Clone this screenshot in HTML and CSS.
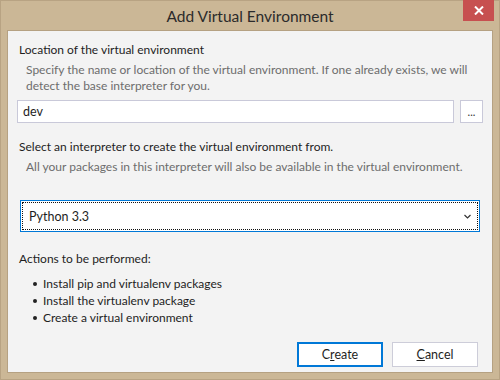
FILE: index.html
```html
<!DOCTYPE html>
<html lang="en">
<head>
    <meta charset="UTF-8">
    <title>Add Virtual Environment</title>
    <link rel="stylesheet" href="styles.css">
</head>
<body>
    <div class="window">
        <!-- Title bar -->
        <div class="title-bar">
            <span class="title">Add Virtual Environment</span>
            <button class="close-btn" type="button" aria-label="Close">
                <svg width="10" height="9" viewBox="0 0 10 9">
                    <path d="M1 0.5 L9 8.5 M9 0.5 L1 8.5" stroke="#fff" stroke-width="2"/>
                </svg>
            </button>
        </div>

        <div class="dialog">
            <div class="label">Location of the virtual environment</div>
            <div class="hint">Specify the name or location of the virtual environment. If one already exists, we will detect the base interpreter for you.</div>

            <div class="path-row">
                <div class="text-input">dev</div>
                <button class="browse-btn" type="button">...</button>
            </div>

            <div class="label label-gap">Select an interpreter to create the virtual environment from.</div>
            <div class="hint">All your packages in this interpreter will also be available in the virtual environment.</div>

            <div class="combo-row">
                <div class="combo">
                    <div class="combo-focus">
                        <span>Python 3.3</span>
                        <svg width="7" height="5" viewBox="0 0 7 5">
                            <path d="M0.5 1 L3.5 4 L6.5 1" fill="none" stroke="#333" stroke-width="1.2"/>
                        </svg>
                    </div>
                </div>
            </div>

            <div class="label actions-title">Actions to be performed:</div>
            <ul class="actions">
                <li>Install pip and virtualenv packages</li>
                <li>Install the virtualenv package</li>
                <li>Create a virtual environment</li>
            </ul>

            <div class="buttons">
                <button class="btn btn-default" type="button">C<u>r</u>eate</button>
                <button class="btn" type="button"><u>C</u>ancel</button>
            </div>
        </div>
    </div>
</body>
</html>
```

FILE: styles.css
```css
* {
    margin: 0;
    padding: 0;
    box-sizing: border-box;
}

body {
    width: 500px;
    height: 380px;
    font-family: Lato, 'Liberation Sans', sans-serif;
    font-size: 12px;
    color: #1e1e1e;
    background: #cbb796;
}

.window {
    width: 500px;
    height: 380px;
    display: flex;
    flex-direction: column;
    background: #cbb796;
    border: 1px solid #b8a383;
}

.title-bar {
    position: relative;
    height: 29px;
    display: flex;
    align-items: center;
    justify-content: center;
}

.title {
    font-size: 15.5px;
    color: #2b2b2b;
    margin-top: 1px;
}

.close-btn {
    position: absolute;
    top: -1px;
    right: 5px;
    width: 31px;
    height: 21px;
    border: none;
    background: #c75050;
    display: flex;
    align-items: center;
    justify-content: center;
}

.dialog {
    flex: 1;
    margin: 0 6px 6px 6px;
    border: 1px solid #b5a182;
    background: #f3f3f3;
    display: flex;
    flex-direction: column;
    padding: 11px 0 5px 0;
}

.label {
    line-height: 16px;
    padding-left: 11px;
}

.label-gap {
    margin-top: 16px;
}

.hint {
    color: #6d6d6d;
    line-height: 16px;
    margin-top: 4px;
    padding: 0 12px 0 18px;
}

.path-row {
    display: flex;
    gap: 6px;
    margin-top: 6px;
    padding: 0 9px;
}

.text-input {
    flex: 1;
    height: 23px;
    background: #fff;
    border: 1px solid #c9c9d9;
    padding: 0 5px;
    line-height: 21px;
    font-size: 12.5px;
}

.browse-btn {
    width: 23px;
    height: 23px;
    background: #fff;
    border: 1px solid #c9c9d9;
    font-family: inherit;
    font-size: 11px;
    color: #333;
}

.combo-row {
    margin-top: 25px;
    padding: 0 12px;
}

.combo {
    height: 32px;
    border: 1px solid #0078d7;
    background: #fff;
    padding: 1px;
}

.combo-focus {
    height: 100%;
    border: 1px dotted #111;
    display: flex;
    align-items: center;
    justify-content: space-between;
    padding: 0 6px 0 6px;
    font-size: 12.5px;
}

.actions-title {
    margin-top: 19px;
}

.actions {
    list-style: none;
    margin-top: 8px;
    padding-left: 25px;
}

.actions li {
    line-height: 17px;
    display: flex;
    align-items: center;
}

.actions li::before {
    content: "";
    width: 4px;
    height: 4px;
    border-radius: 50%;
    background: #222;
    margin-right: 6px;
    margin-top: 1px;
}

.buttons {
    margin-top: auto;
    display: flex;
    justify-content: flex-end;
    gap: 9px;
    padding-right: 14px;
}

.btn {
    width: 86px;
    height: 25px;
    background: #fff;
    border: 1px solid #cdcdd9;
    font-family: inherit;
    font-size: 12.5px;
    color: #1e1e1e;
}

.btn-default {
    border: 2px solid #0078d7;
}
```
